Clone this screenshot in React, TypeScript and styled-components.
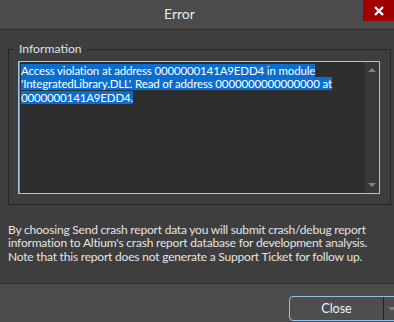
import styled, { createGlobalStyle } from 'styled-components';

const GlobalStyle = createGlobalStyle`
	html, body {
		margin: 0;
		padding: 0;
		background: #3e3e3e;
	}
	* {
		box-sizing: border-box;
	}
`;

const Window = styled.div`
	width: 394px;
	height: 322px;
	display: flex;
	flex-direction: column;
	background: #3e3e3e;
	font-family: Lato, 'Noto Sans', sans-serif;
	color: #e2e2e2;
	overflow: hidden;
`;

const TitleBar = styled.div`
	height: 30px;
	flex-shrink: 0;
	display: flex;
	flex-direction: row;
	align-items: flex-start;
	background: #4b4b4b;
	border-bottom: 1px solid #2f2f2f;
`;

const Title = styled.div`
	flex: 1;
	text-align: center;
	font-size: 14px;
	line-height: 28px;
	padding-right: 4px;
	color: #e6ecf0;
`;

const CloseX = styled.div`
	width: 31px;
	height: 21px;
	background: #a00000;
	display: flex;
	align-items: center;
	justify-content: center;
`;

const Body = styled.div`
	flex: 1;
	display: flex;
	flex-direction: column;
	padding: 12px 3px 0 8px;
`;

const GroupBox = styled.fieldset`
	margin: 0;
	height: 163px;
	padding: 5px 10px 10px 9px;
	border: 1px solid #262626;
	border-radius: 0;
	display: flex;
`;

const Legend = styled.legend`
	font-size: 12.2px;
	color: #d6e4ee;
	padding: 0 5px;
	margin-left: -4px;
	line-height: 14px;
`;

const TextBox = styled.div`
	flex: 1;
	display: flex;
	flex-direction: row;
	border: 1px solid #9cc8f2;
	background: #2e2e2e;
	height: 133px;
`;

const TextContent = styled.div`
	flex: 1;
	padding: 2px 2px 0 1px;
	font-size: 11.5px;
	line-height: 13.3px;
	letter-spacing: -0.15px;
	color: #fff;
	white-space: nowrap;
	border-left: 1px solid #e07020;
`;

const Selected = styled.span`
	background: #0a6ed1;
	color: #ffffff;
`;

const ScrollBar = styled.div`
	width: 14px;
	background: #383838;
	display: flex;
	flex-direction: column;
	justify-content: space-between;
	align-items: center;
	padding: 6px 0 6px;
`;

const Arrow = styled.div<{ $down?: boolean }>`
	width: 0;
	height: 0;
	border-left: 4px solid transparent;
	border-right: 4px solid transparent;
	${(p) => (p.$down ? 'border-top: 4px solid #808080;' : 'border-bottom: 4px solid #808080;')}
`;

const Note = styled.p`
	margin: 18px 0 0;
	font-size: 12px;
	line-height: 13.3px;
	letter-spacing: -0.2px;
	color: #e4e4e4;
	white-space: nowrap;
`;

const Footer = styled.div`
	height: 39px;
	flex-shrink: 0;
	background: #4b4b4b;
	border-top: 1px solid #2c2c2c;
	display: flex;
	justify-content: flex-end;
	align-items: flex-start;
	padding-top: 12px;
`;

const SplitButton = styled.div`
	width: 112px;
	height: 25px;
	margin-right: -7px;
	border: 1px solid #94bfe8;
	border-radius: 4px;
	background: #4e4e4e;
	display: flex;
	flex-direction: row;
	align-items: stretch;
`;

const ButtonLabel = styled.div`
	width: 94px;
	display: flex;
	align-items: center;
	justify-content: center;
	font-size: 12.5px;
	color: #eef4f8;
	border-right: 1px solid #222;
`;

const ButtonDrop = styled.div`
	flex: 1;
	display: flex;
	align-items: center;
	justify-content: center;
`;

export default function App() {
	return (
		<>
			<GlobalStyle />
			<Window>
				<TitleBar>
					<Title>Error</Title>
					<CloseX>
						<svg width="10" height="10" viewBox="0 0 10 10">
							<path d="M1 1 L9 9 M9 1 L1 9" stroke="#fff" strokeWidth="2.4" />
						</svg>
					</CloseX>
				</TitleBar>
				<Body>
					<GroupBox>
						<Legend>Information</Legend>
						<TextBox>
							<TextContent>
								<Selected>Access violation at address 0000000141A9EDD4 in module </Selected>
								<br />
								<Selected>'IntegratedLibrary.DLL'. Read of address 0000000000000000 at </Selected>
								<br />
								<Selected>0000000141A9EDD4.</Selected>
							</TextContent>
							<ScrollBar>
								<Arrow />
								<Arrow $down />
							</ScrollBar>
						</TextBox>
					</GroupBox>
					<Note>
						By choosing Send crash report data you will submit crash/debug report
						<br />
						information to Altium's crash report database for development analysis.
						<br />
						Note that this report does not generate a Support Ticket for follow up.
					</Note>
				</Body>
				<Footer>
					<SplitButton>
						<ButtonLabel>Close</ButtonLabel>
						<ButtonDrop>
							<Arrow $down />
						</ButtonDrop>
					</SplitButton>
				</Footer>
			</Window>
		</>
	);
}
